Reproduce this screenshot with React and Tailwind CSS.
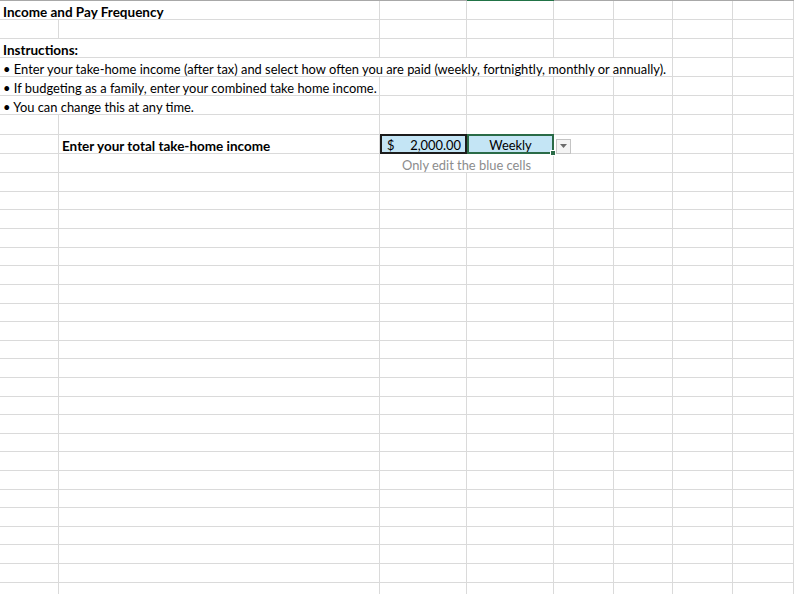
import React from 'react';

// column widths of the sheet, A..H
const colW = ['w-[59px]', 'w-[321px]', 'w-[87px]', 'w-[87px]', 'w-[60px]', 'w-[59px]', 'w-[60px]', 'w-[61px]'];

const font = { fontFamily: 'Lato, "Liberation Sans", sans-serif' };

function Cell({ i, noRight, className = '', children }) {
  return (
    <div
      className={`${colW[i]} shrink-0 h-full box-border border-b border-[#dadada] ${noRight ? '' : 'border-r'} flex items-end ${className}`}
    >
      {children}
    </div>
  );
}

// a plain row; `hide` lists columns whose right gridline sits under spilled text
function Row({ hide = [], text, bold, h = 'h-[19.1px]' }) {
  return (
    <div className={`${h} flex`}>
      {colW.map((_, i) => (
        <Cell key={i} i={i} noRight={hide.includes(i)}>
          {i === 0 && text && (
            <span
              className={`whitespace-nowrap pl-[3px] leading-[14px] text-black ${bold ? 'font-bold text-[13.5px]' : 'text-[12.9px]'}`}
            >
              {text}
            </span>
          )}
        </Cell>
      ))}
    </div>
  );
}

function Dropdown() {
  return (
    <div className="absolute left-[2px] top-[4px] w-[15px] h-[15px] border border-[#c4c4c4] bg-[#f4f4f4] flex items-center justify-center">
      <svg width="7" height="4" viewBox="0 0 7 4">
        <path d="M0 0 L7 0 L3.5 4 Z" fill="#6b6b6b" />
      </svg>
    </div>
  );
}

export default function App() {
  const empty = Array.from({ length: 22 });

  return (
    <div className="w-[794px] h-[594px] bg-white overflow-hidden" style={font}>
      {/* top edge, column D header marker */}
      <div className="h-[1px] flex">
        <div className="w-[467px] bg-[#a8a8a8]" />
        <div className="w-[87px] bg-[#217346]" />
        <div className="flex-1 bg-[#a8a8a8]" />
      </div>

      <Row text="Income and Pay Frequency" bold hide={[0]} h="h-[19px]" />
      <Row />
      <Row text="Instructions:" bold hide={[0]} />
      <Row
        text="• Enter your take-home income (after tax) and select how often you are paid (weekly, fortnightly, monthly or annually)."
        hide={[0, 1, 2, 3, 4]}
      />
      <Row text="• If budgeting as a family, enter your combined take home income." hide={[0]} />
      <Row text="• You can change this at any time." hide={[0]} />
      <Row />

      {/* income input row */}
      <div className="h-[19.1px] flex">
        <Cell i={0} />
        <Cell i={1}>
          <span className="whitespace-nowrap pl-[3px] leading-[14px] text-[13.5px] font-bold text-black">
            Enter your total take-home income
          </span>
        </Cell>
        <div className="w-[87px] shrink-0 h-[calc(100%+1px)] -mt-[1px] box-border border-2 border-[#1c1c1c] bg-[#c4e5f5] flex items-end justify-between pl-[5px] pr-[4px] leading-[14px] text-[12.9px] text-black z-10">
          <span>$</span>
          <span>2,000.00</span>
        </div>
        <div className="relative w-[87px] shrink-0 h-[calc(100%+1px)] -mt-[1px] box-border border-2 border-[#2a6b47] bg-[#c4e5f5] flex items-end justify-center leading-[14px] text-[12.9px] text-black z-10">
          <span>Weekly</span>
          <div className="absolute -right-[4px] -bottom-[4px] w-[6px] h-[6px] bg-[#2a6b47] border border-white" />
        </div>
        <Cell i={4} className="relative">
          <Dropdown />
        </Cell>
        <Cell i={5} />
        <Cell i={6} />
        <Cell i={7} />
      </div>

      {/* hint row */}
      <div className="h-[19.1px] flex">
        <Cell i={0} />
        <Cell i={1} />
        <div className="w-[174px] shrink-0 h-full box-border border-b border-r border-[#dadada] flex items-end justify-center">
          <span className="whitespace-nowrap leading-[14px] text-[12.9px] text-[#8c8c8c]">
            Only edit the blue cells
          </span>
        </div>
        <Cell i={4} />
        <Cell i={5} />
        <Cell i={6} />
        <Cell i={7} />
      </div>

      <Row />

      {empty.map((_, k) => (
        <Row key={k} h="h-[18.62px]" />
      ))}
    </div>
  );
}
